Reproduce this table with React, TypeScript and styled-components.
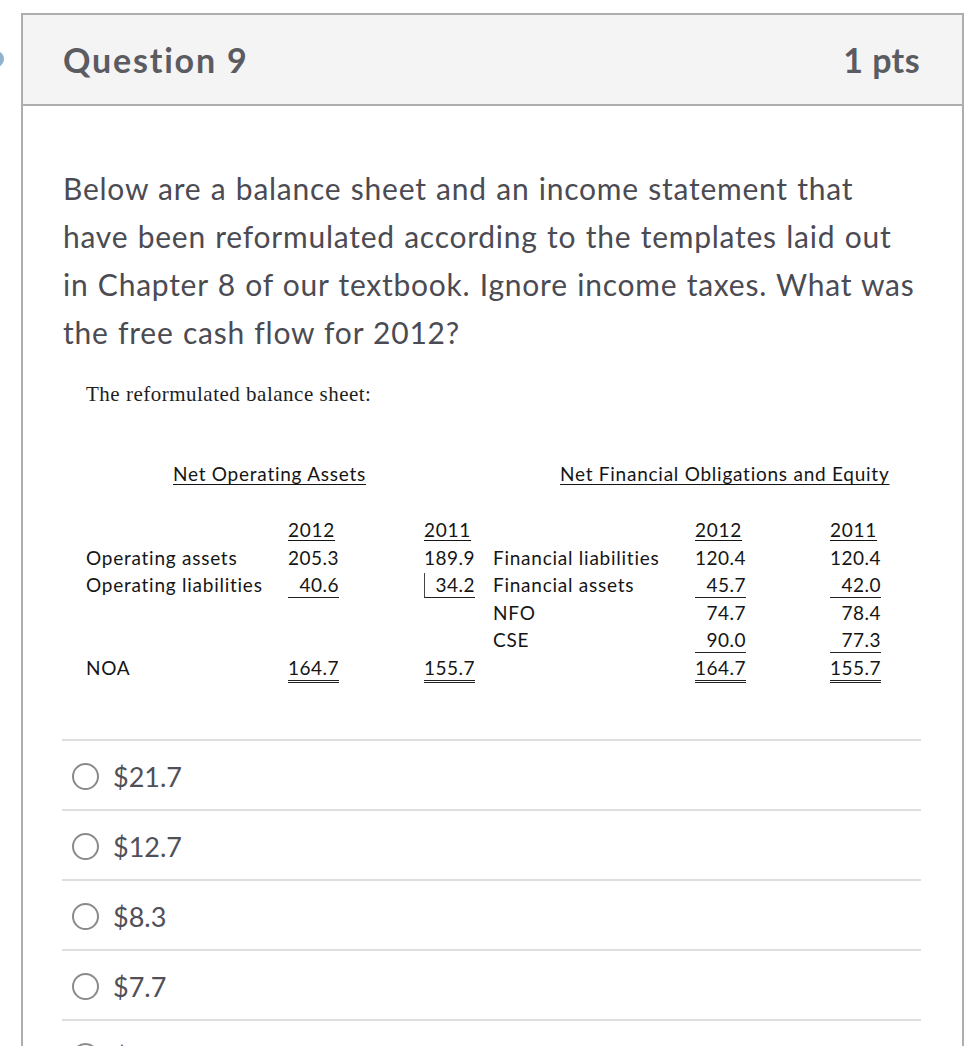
import React from 'react';
import styled, {createGlobalStyle} from 'styled-components';

const GlobalStyle = createGlobalStyle`
  html, body {
    margin: 0;
    padding: 0;
    background: #ffffff;
  }
  body {
    font-family: Lato, "Noto Sans", sans-serif;
  }
`;

const Page = styled('div')`
  position: relative;
  padding: 13px 10px 0 21px;
  height: 1046px;
  box-sizing: border-box;
  overflow: hidden;
`;

const EdgeDot = styled('span')`
  position: absolute;
  left: -12px;
  top: 51px;
  width: 16px;
  height: 16px;
  border-radius: 50%;
  background: #8fb3cf;
`;

const Card = styled('div')`
  border: 2px solid #aeaeae;
  border-bottom: none;
  height: 1100px;
  box-sizing: border-box;
`;

const Header = styled('div')`
  display: flex;
  align-items: center;
  justify-content: space-between;
  height: 89px;
  padding: 0 42px 0 40px;
  background: #f4f4f4;
  border-bottom: 2px solid #aeaeae;
  color: #5b5b62;
  font-family: Lato, sans-serif;
  font-weight: 700;
  font-size: 34px;
`;

const Title = styled('span')<{$spacing: number}>`
  letter-spacing: ${p => p.$spacing}px;
`;

const Body = styled('div')`
  padding: 58px 41px 0 40px;
`;

const Prompt = styled('p')`
  margin: 0;
  font-family: Lato, sans-serif;
  font-size: 30px;
  line-height: 48px;
  letter-spacing: 0.75px;
  word-spacing: 1px;
  color: #4b4b53;
`;

const Sheet = styled('div')`
  margin: 26px 0 0 23px;
  color: #151515;
`;

const Caption = styled('div')`
  font-family: "Liberation Serif", "Times New Roman", serif;
  font-size: 21px;
  line-height: 24px;
  letter-spacing: 0.5px;
  color: #1e1e1e;
`;

const Table = styled('div')`
  display: grid;
  grid-template-columns: 202px 51px 85px 51px 18px 202px 51px 84px 51px;
  grid-template-rows: 56px repeat(6, 27.6px);
  margin-top: 56px;
  font-family: Lato, "Liberation Sans", sans-serif;
  font-size: 19px;
  line-height: 24px;
  letter-spacing: 0.75px;
`;

const Heading = styled('div')<{$col: string; $indent: number}>`
  grid-row: 1;
  grid-column: ${p => p.$col};
  margin-left: ${p => p.$indent}px;
  text-decoration: underline;
  text-underline-offset: 3px;
  text-decoration-thickness: 1px;
  white-space: nowrap;
`;

const Label = styled('div')<{$col: number; $row: number}>`
  grid-column: ${p => p.$col};
  grid-row: ${p => p.$row};
  white-space: nowrap;
`;

const Year = styled(Label)`
  text-decoration: underline;
  text-underline-offset: 3px;
  text-decoration-thickness: 1px;
`;

const Num = styled(Label)<{$line?: 'single' | 'double'; $tick?: boolean}>`
  justify-self: stretch;
  align-self: start;
  text-align: right;
  height: 24px;
  letter-spacing: 0.5px;
  border-bottom: ${p => p.$line === 'double' ? '3px double #222' : p.$line === 'single' ? '1px solid #222' : 'none'};
  border-left: ${p => p.$tick ? '1px solid #444' : 'none'};
`;

const Options = styled('div')`
  margin: 55px 0 0 -1px;
`;

const Option = styled('label')`
  display: flex;
  align-items: center;
  gap: 14px;
  height: 70px;
  padding: 4px 0 0 10px;
  box-sizing: border-box;
  border-top: 2px solid #dedede;
  font-family: Lato, sans-serif;
  font-size: 27px;
  color: #505058;
`;

const Radio = styled('span')`
  width: 23px;
  height: 23px;
  border: 2px solid #8a8a8e;
  border-radius: 50%;
  flex-shrink: 0;
`;

const answers = ['$21.7', '$12.7', '$8.3', '$7.7', '$0'];

export default function App() {
    return (
        <>
            <GlobalStyle/>
            <Page>
                <EdgeDot/>
                <Card>
                    <Header>
                        <Title $spacing={1.8}>Question 9</Title>
                        <Title $spacing={0.4}>1 pts</Title>
                    </Header>
                    <Body>
                        <Prompt>
                            Below are a balance sheet and an income statement that have been reformulated
                            according to the templates laid out in Chapter 8 of our textbook. Ignore income
                            taxes. What was the free cash flow for 2012?
                        </Prompt>
                        <Sheet>
                            <Caption>The reformulated balance sheet:</Caption>
                            <Table>
                                <Heading $col="1 / 5" $indent={87}>Net Operating Assets</Heading>
                                <Heading $col="6 / 10" $indent={67}>Net Financial Obligations and Equity</Heading>

                                <Year $col={2} $row={2}>2012</Year>
                                <Year $col={4} $row={2}>2011</Year>
                                <Year $col={7} $row={2}>2012</Year>
                                <Year $col={9} $row={2}>2011</Year>

                                <Label $col={1} $row={3}>Operating assets</Label>
                                <Num $col={2} $row={3}>205.3</Num>
                                <Num $col={4} $row={3}>189.9</Num>
                                <Label $col={6} $row={3}>Financial liabilities</Label>
                                <Num $col={7} $row={3}>120.4</Num>
                                <Num $col={9} $row={3}>120.4</Num>

                                <Label $col={1} $row={4}>Operating liabilities</Label>
                                <Num $col={2} $row={4} $line="single">40.6</Num>
                                <Num $col={4} $row={4} $line="single" $tick>34.2</Num>
                                <Label $col={6} $row={4}>Financial assets</Label>
                                <Num $col={7} $row={4} $line="single">45.7</Num>
                                <Num $col={9} $row={4} $line="single">42.0</Num>

                                <Label $col={6} $row={5}>NFO</Label>
                                <Num $col={7} $row={5}>74.7</Num>
                                <Num $col={9} $row={5}>78.4</Num>

                                <Label $col={6} $row={6}>CSE</Label>
                                <Num $col={7} $row={6} $line="single">90.0</Num>
                                <Num $col={9} $row={6} $line="single">77.3</Num>

                                <Label $col={1} $row={7}>NOA</Label>
                                <Num $col={2} $row={7} $line="double">164.7</Num>
                                <Num $col={4} $row={7} $line="double">155.7</Num>
                                <Num $col={7} $row={7} $line="double">164.7</Num>
                                <Num $col={9} $row={7} $line="double">155.7</Num>
                            </Table>
                        </Sheet>
                        <Options>
                            {answers.map(a => (
                                <Option key={a}>
                                    <Radio/>
                                    <span>{a}</span>
                                </Option>
                            ))}
                        </Options>
                    </Body>
                </Card>
            </Page>
        </>
    );
}
